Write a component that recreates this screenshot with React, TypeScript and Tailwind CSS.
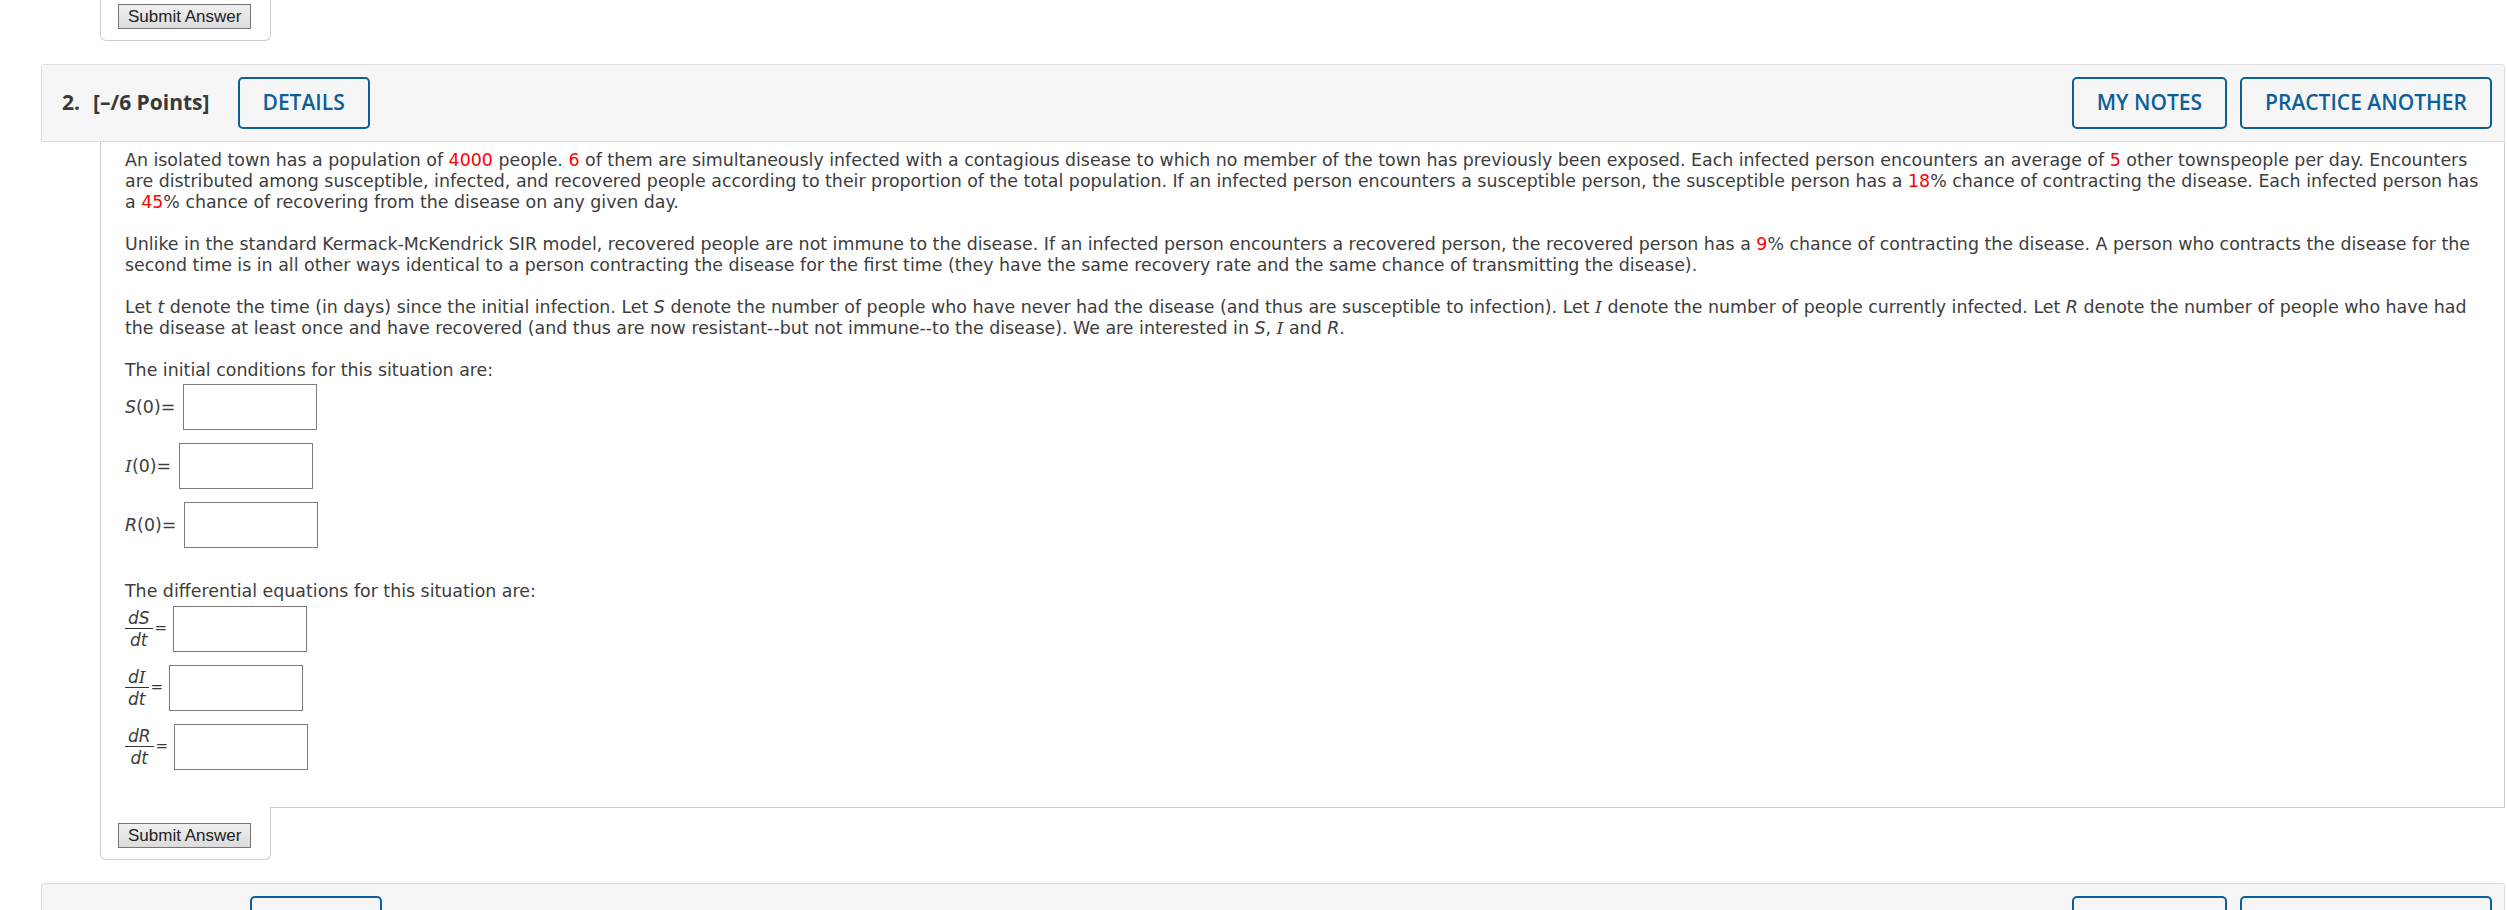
import React from "react";

const Red = ({ children }: { children: React.ReactNode }) => (
  <span className="text-[#ff0000]">{children}</span>
);

const V = ({ children }: { children: React.ReactNode }) => <i>{children}</i>;
const VI = () => <i className="font-['DejaVu_Serif',serif]">I</i>;

const SubmitButton = () => (
  <button className="h-[25px] px-[9px] border border-[#767676] bg-gradient-to-b from-[#f0f0f0] to-[#dcdcdc] text-[17px] leading-none text-[#222] font-['Liberation_Sans',Arial,sans-serif]">
    Submit Answer
  </button>
);

const HeaderButton = ({ children, className = "" }: { children: React.ReactNode; className?: string }) => (
  <button
    className={`h-[52px] px-[23px] border-2 border-[#0d5f9b] rounded-[5px] text-[#0d5f9b] text-[21px] font-semibold ${className}`}
  >
    {children}
  </button>
);

const QuestionHeader = ({ num, points }: { num: string; points: string }) => (
  <div className="h-[78px] flex items-center bg-[#f6f6f6] border border-[#dddddd] rounded-t-[3px] pl-[20px] pr-[12px] font-['Open_Sans',sans-serif] text-[#383838]">
    <span className="text-[21px] font-bold">{num}</span>
    <span className="ml-[13px] text-[21px] font-bold">{points}</span>
    <HeaderButton className="ml-[28px]">DETAILS</HeaderButton>
    <div className="ml-auto flex gap-[13px]">
      <HeaderButton className="px-[22px]">MY NOTES</HeaderButton>
      <HeaderButton>PRACTICE ANOTHER</HeaderButton>
    </div>
  </div>
);

const AnswerBox = () => (
  <input type="text" className="w-[134px] h-[46px] border border-[#7d7d7d] bg-white outline-none" />
);

const Frac = ({ top }: { top: React.ReactNode }) => (
  <span className="inline-flex flex-col items-stretch italic text-[17px] leading-[17px]">
    <span className="px-[3px] pb-[1px] text-center border-b border-[#333]">d{top}</span>
    <span className="px-[3px] pt-[3px] text-center">dt</span>
  </span>
);

const Eq = () => <span className="ml-[2px] mr-[6px] -mt-[2px] text-[15px]">=</span>;

export default function App() {
  return (
    <div className="h-[910px] overflow-hidden bg-white text-[#3d3d3d] font-['DejaVu_Sans',Verdana,sans-serif]">
      {/* end of previous question */}
      <div className="ml-[100px] w-[171px] h-[41px] border border-t-0 border-[#cccccc] rounded-b-[6px] pl-[17px] pt-[4px]">
        <SubmitButton />
      </div>

      {/* question 2 */}
      <section className="mt-[23px] ml-[41px] mr-[2px]">
        <QuestionHeader num="2." points="[–/6 Points]" />

        <div className="ml-[59px] border-x border-b border-[#cccccc] pl-[24px] pr-[22px] pt-[8px] pb-[37px] text-[17.4px] leading-[21px]">
          <p className="mb-[21px]">
            An isolated town has a population of <Red>4000</Red> people. <Red>6</Red> of them are simultaneously
            infected with a contagious disease to which no member of the town has previously been exposed. Each
            infected person encounters an average of <Red>5</Red> other townspeople per day. Encounters are
            distributed among susceptible, infected, and recovered people according to their proportion of the total
            population. If an infected person encounters a susceptible person, the susceptible person has a{" "}
            <Red>18</Red>% chance of contracting the disease. Each infected person has a <Red>45</Red>% chance of
            recovering from the disease on any given day.
          </p>
          <p className="mb-[21px]">
            Unlike in the standard Kermack-McKendrick SIR model, recovered people are not immune to the disease. If an
            infected person encounters a recovered person, the recovered person has a <Red>9</Red>% chance of
            contracting the disease. A person who contracts the disease for the second time is in all other ways
            identical to a person contracting the disease for the first time (they have the same recovery rate and the
            same chance of transmitting the disease).
          </p>
          <p className="mb-[21px]">
            Let <V>t</V> denote the time (in days) since the initial infection. Let <V>S</V> denote the number of
            people who have never had the disease (and thus are susceptible to infection). Let <VI /> denote the
            number of people currently infected. Let <V>R</V> denote the number of people who have had the disease at
            least once and have recovered (and thus are now resistant--but not immune--to the disease). We are
            interested in <V>S</V>, <VI /> and <V>R</V>.
          </p>

          <p>The initial conditions for this situation are:</p>
          <div className="mt-[3px] flex flex-col gap-[13px]">
            <div className="flex items-center gap-[8px]">
              <span>
                <V>S</V>(0)=
              </span>
              <AnswerBox />
            </div>
            <div className="flex items-center gap-[8px]">
              <span>
                <VI />
                (0)=
              </span>
              <AnswerBox />
            </div>
            <div className="flex items-center gap-[8px]">
              <span>
                <V>R</V>(0)=
              </span>
              <AnswerBox />
            </div>
          </div>

          <p className="mt-[33px]">The differential equations for this situation are:</p>
          <div className="mt-[4px] flex flex-col gap-[13px]">
            <div className="flex items-center">
              <Frac top="S" />
              <Eq />
              <AnswerBox />
            </div>
            <div className="flex items-center">
              <Frac top={<span className="font-['DejaVu_Serif',serif]">I</span>} />
              <Eq />
              <AnswerBox />
            </div>
            <div className="flex items-center">
              <Frac top="R" />
              <Eq />
              <AnswerBox />
            </div>
          </div>
        </div>

        <div className="ml-[59px] -mt-px w-[171px] h-[53px] bg-white border border-t-0 border-[#cccccc] rounded-b-[6px] pl-[17px] pt-[16px]">
          <SubmitButton />
        </div>
      </section>

      {/* question 3 */}
      <section className="mt-[23px] ml-[41px] mr-[2px]">
        <QuestionHeader num="3." points="[–/10 Points]" />
      </section>
    </div>
  );
}
